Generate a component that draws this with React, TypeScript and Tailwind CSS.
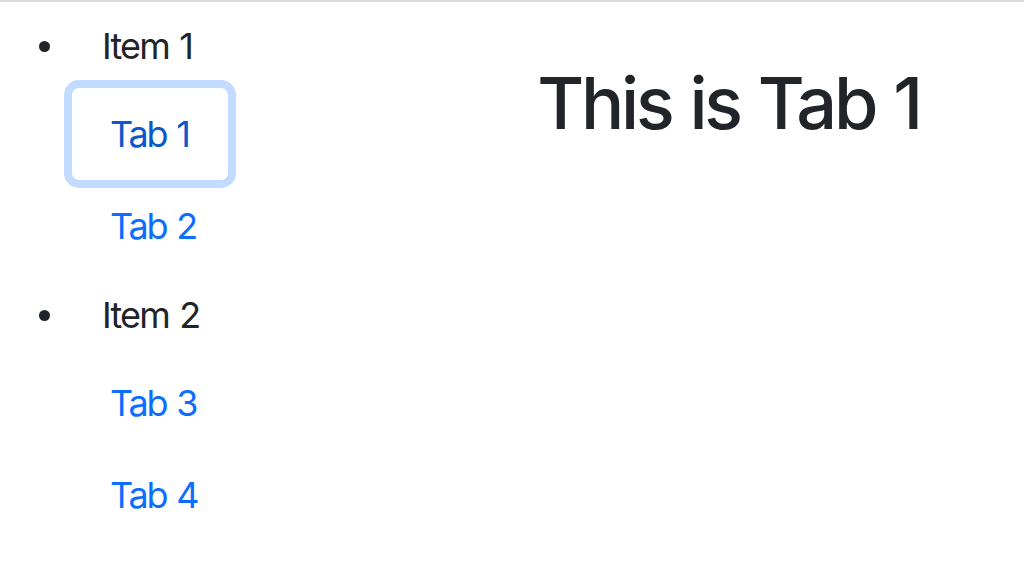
import React, { useState } from "react";

const groups = [
  { label: "Item 1", tabs: ["Tab 1", "Tab 2"] },
  { label: "Item 2", tabs: ["Tab 3", "Tab 4"] },
];

function App() {
  const [active, setActive] = useState("Tab 1");

  return (
    <div className="min-h-screen w-full bg-white border-t-2 border-[#dcdcdc] font-['Inter',sans-serif] text-[#212529] flex">
      <div className="w-[433px] shrink-0 pt-[17px]">
        <ul>
          {groups.map((group) => (
            <li key={group.label} className="mb-[16px]">
              <div className="flex items-center h-[54px]">
                <div className="w-[72px] shrink-0 flex items-center">
                  <span className="ml-[39px] w-[11px] h-[11px] rounded-full bg-[#212529]" />
                </div>
                <span className="pl-[30px] text-[36px] leading-[54px] tracking-[-0.05em] [word-spacing:2px]">
                  {group.label}
                </span>
              </div>
              <div className="mt-[15px] ml-[72px] flex flex-col">
                {group.tabs.map((tab) => (
                  <button
                    key={tab}
                    onClick={() => setActive(tab)}
                    className={`w-[156px] h-[92px] text-left pl-[38px] text-[36px] leading-[54px] tracking-[-0.06em] [word-spacing:2px] rounded-[7px] outline-none ${
                      active === tab
                        ? "text-[#0a58ca] shadow-[0_0_0_8px_#c3dbfe]"
                        : "text-[#0d6efd]"
                    }`}
                  >
                    {tab}
                  </button>
                ))}
              </div>
            </li>
          ))}
        </ul>
      </div>
      <div className="flex-1 text-center pt-[58px]">
        <h1 className="text-[72px] leading-[86px] font-medium tracking-[-0.045em] [word-spacing:2px]">
          This is {active}
        </h1>
      </div>
    </div>
  );
}

export default App;
